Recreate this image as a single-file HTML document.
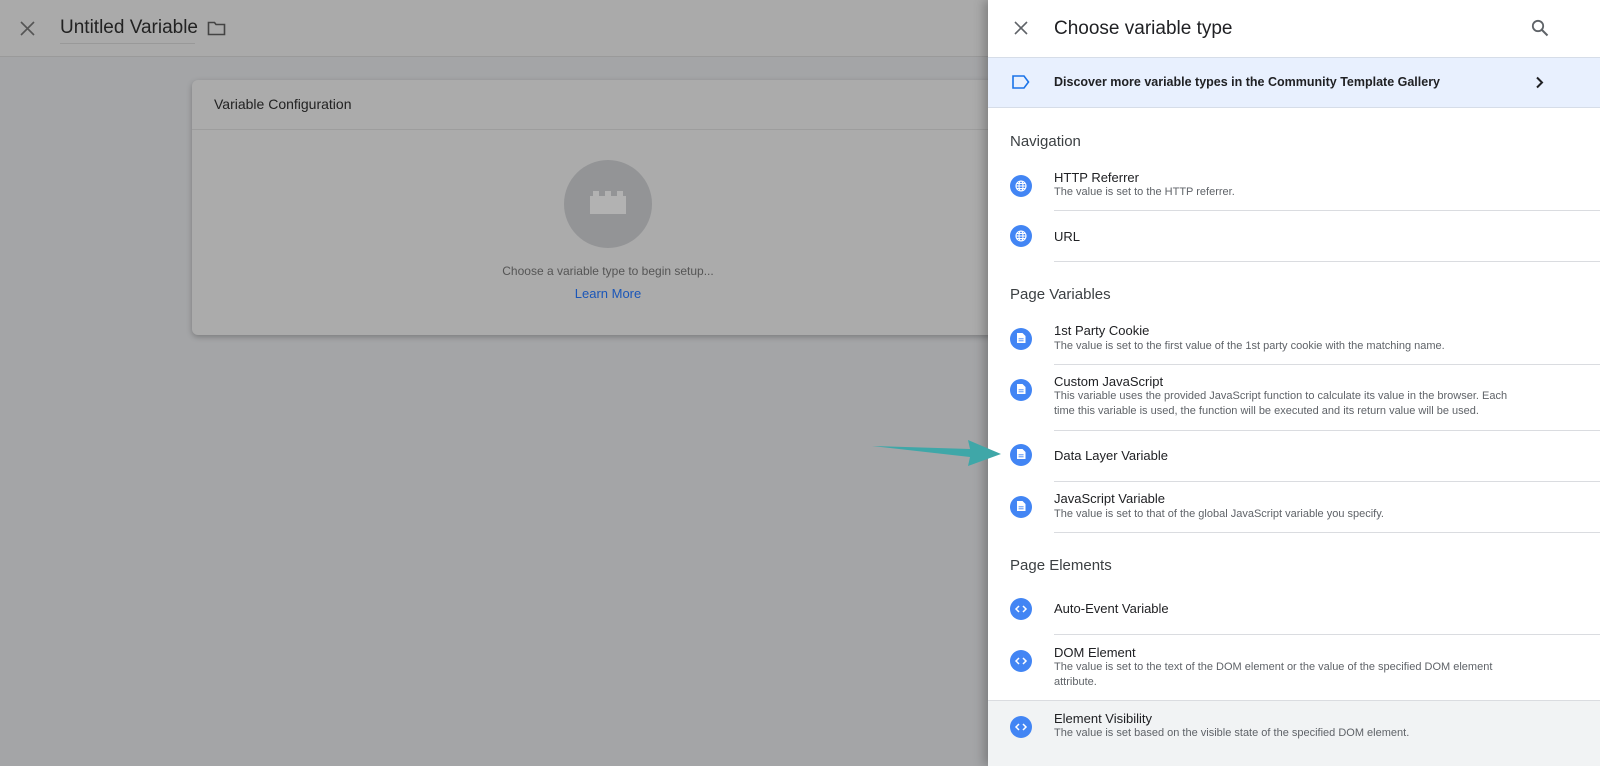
<!DOCTYPE html>
<html><head><meta charset="utf-8"><style>
*{margin:0;padding:0;box-sizing:border-box}
body{width:1600px;height:766px;overflow:hidden;font-family:"Liberation Sans",Arial,sans-serif;background:#a4a5a7;position:relative}
.abs{position:absolute}
.top{left:0;top:0;width:988px;height:57px;background:#aaaaaa;border-bottom:1px solid #9a9a9a}
.card{left:192px;top:80px;width:830px;height:255px;background:#ababab;border-radius:6px;box-shadow:0 2px 6px rgba(0,0,0,.25)}
.panel{left:988px;top:0;width:612px;height:766px;background:#fff;box-shadow:-4px 0 10px rgba(0,0,0,.25)}
.t{color:#202124;font-size:13px;position:absolute;left:66px}
.d{color:#5f6368;font-size:11px;position:absolute;left:66px;line-height:15px}
.sec{position:absolute;left:22px;font-size:15px;color:#3c4043}
.hr{position:absolute;left:66px;right:0;height:1px;background:#dadce0}
.ic{position:absolute;left:22px;width:22px;height:22px;border-radius:50%;background:#4285f4}
</style></head><body>
<div class="abs top">
<svg class="abs" style="left:20px;top:21px" width="15" height="15" viewBox="0 0 15 15"><path d="M1 1L14 14M14 1L1 14" stroke="#555" stroke-width="1.6"/></svg>
<div class="abs" style="left:60px;top:17px;font-size:19px;color:#222">Untitled Variable</div>
<div class="abs" style="left:60px;top:43px;width:135px;height:1px;background:#999"></div>
<svg class="abs" style="left:207px;top:20px" width="19" height="17" viewBox="0 0 19 17"><path d="M1.5 2.5h6l1.5 2h8.5v10h-16z" fill="none" stroke="#444" stroke-width="1.6"/></svg>
</div>
<div class="abs card">
<div class="abs" style="left:22px;top:16px;font-size:14px;color:#222">Variable Configuration</div>
<div class="abs" style="left:0;right:0;top:49px;height:1px;background:#9d9d9d"></div>
<div class="abs" style="left:372px;top:80px;width:88px;height:88px;border-radius:50%;background:#939496"></div>
<div class="abs" style="left:398px;top:116px;width:36px;height:18px;background:#b2b2b2"></div>
<div class="abs" style="left:401px;top:111px;width:6px;height:6px;background:#b2b2b2"></div>
<div class="abs" style="left:413px;top:111px;width:6px;height:6px;background:#b2b2b2"></div>
<div class="abs" style="left:425px;top:111px;width:6px;height:6px;background:#b2b2b2"></div>
<div class="abs" style="left:0;width:832px;top:184px;text-align:center;font-size:12px;color:#555">Choose a variable type to begin setup...</div>
<div class="abs" style="left:0;width:832px;top:206px;text-align:center;font-size:13px;color:#1a56b8">Learn More</div>
</div>
<div class="abs panel">
<svg class="abs" style="left:26px;top:21px" width="14" height="14" viewBox="0 0 14 14"><path d="M1 1L13 13M13 1L1 13" stroke="#5f6368" stroke-width="1.6"/></svg>
<div class="abs" style="left:66px;top:18px;font-size:19px;color:#202124">Choose variable type</div>
<svg class="abs" style="left:543px;top:19px" width="18" height="18" viewBox="0 0 18 18"><circle cx="7" cy="7" r="5.2" fill="none" stroke="#5f6368" stroke-width="1.8"/><path d="M11 11L16.5 16.5" stroke="#5f6368" stroke-width="2"/></svg>
<div class="abs" style="left:0;right:0;top:57px;height:51px;background:#e8f0fe;border-top:1px solid #d6dde8;border-bottom:1px solid #d6dde8"></div>
<svg class="abs" style="left:24px;top:75px" width="18" height="14" viewBox="0 0 18 14"><path d="M1 1h11l4.5 6-4.5 6H1z" fill="none" stroke="#1a73e8" stroke-width="1.6"/></svg>
<div class="t" style="top:75px;font-size:12.5px;font-weight:bold;color:#202124">Discover more variable types in the Community Template Gallery</div>
<svg class="abs" style="left:547px;top:76px" width="9" height="13" viewBox="0 0 9 13"><path d="M2 1.5L7 6.5L2 11.5" fill="none" stroke="#202124" stroke-width="2"/></svg>

<div class="sec" style="top:133px">Navigation</div>
<div class="ic" style="top:175px"></div><div class="t" style="top:170px">HTTP Referrer</div><div class="d" style="top:185px">The value is set to the HTTP referrer.</div>
<div class="hr" style="top:210px"></div>
<div class="ic" style="top:225px"></div><div class="t" style="top:229px">URL</div>
<div class="hr" style="top:261px"></div>

<div class="sec" style="top:286px">Page Variables</div>
<div class="ic" style="top:328px"></div><div class="t" style="top:323px">1st Party Cookie</div><div class="d" style="top:339px">The value is set to the first value of the 1st party cookie with the matching name.</div>
<div class="hr" style="top:364px"></div>
<div class="ic" style="top:379px"></div><div class="t" style="top:374px">Custom JavaScript</div><div class="d" style="top:389px;width:460px">This variable uses the provided JavaScript function to calculate its value in the browser. Each time this variable is used, the function will be executed and its return value will be used.</div>
<div class="hr" style="top:430px"></div>
<div class="ic" style="top:444px"></div><div class="t" style="top:448px">Data Layer Variable</div>
<div class="hr" style="top:481px"></div>
<div class="ic" style="top:496px"></div><div class="t" style="top:491px">JavaScript Variable</div><div class="d" style="top:507px">The value is set to that of the global JavaScript variable you specify.</div>
<div class="hr" style="top:532px"></div>

<div class="sec" style="top:557px">Page Elements</div>
<div class="ic" style="top:598px"></div><div class="t" style="top:601px">Auto-Event Variable</div>
<div class="hr" style="top:634px"></div>
<div class="ic" style="top:650px"></div><div class="t" style="top:645px">DOM Element</div><div class="d" style="top:660px;width:470px">The value is set to the text of the DOM element or the value of the specified DOM element attribute.</div>
<div class="abs" style="left:0;right:0;top:700px;bottom:0;background:#f1f3f4;border-top:1px solid #dadce0"></div>
<div class="ic" style="top:716px"></div><div class="t" style="top:711px">Element Visibility</div><div class="d" style="top:726px">The value is set based on the visible state of the specified DOM element.</div>
</div>
<svg class="abs" style="left:870px;top:438px;z-index:5" width="132" height="30" viewBox="0 0 132 30"><path d="M2 8L100 11L98 2L131 16L98 28L100 19Z" fill="#3fa7a8"/></svg>
<svg class="abs" style="left:1010px;top:0;z-index:5" width="22" height="766" viewBox="0 0 22 766">
<g fill="none" stroke="#fff" stroke-width="1.1">
<g transform="translate(11,186)"><circle r="5"/><ellipse rx="2" ry="5"/><path d="M-5 0h10M-4.3-2.5h8.6M-4.3 2.5h8.6"/></g>
<g transform="translate(11,236)"><circle r="5"/><ellipse rx="2" ry="5"/><path d="M-5 0h10M-4.3-2.5h8.6M-4.3 2.5h8.6"/></g>
</g>
<g fill="#fff">
<path d="M7 333h5.5l3 3v7h-8.5z"/>
<path d="M7 384h5.5l3 3v7h-8.5z"/>
<path d="M7 449h5.5l3 3v7h-8.5z"/>
<path d="M7 501h5.5l3 3v7h-8.5z"/>
</g>
<g stroke="#4285f4" stroke-width="0.9">
<path d="M8.6 338.8h5M8.6 340.8h5M8.6 389.8h5M8.6 391.8h5M8.6 454.8h5M8.6 456.8h5M8.6 506.8h5M8.6 508.8h5"/>
</g>
<g fill="none" stroke="#fff" stroke-width="1.5">
<path d="M9 606l-3 3 3 3M13 606l3 3-3 3"/>
<path d="M9 658l-3 3 3 3M13 658l3 3-3 3"/>
<path d="M9 724l-3 3 3 3M13 724l3 3-3 3"/>
</g>
</svg>
</body></html>
